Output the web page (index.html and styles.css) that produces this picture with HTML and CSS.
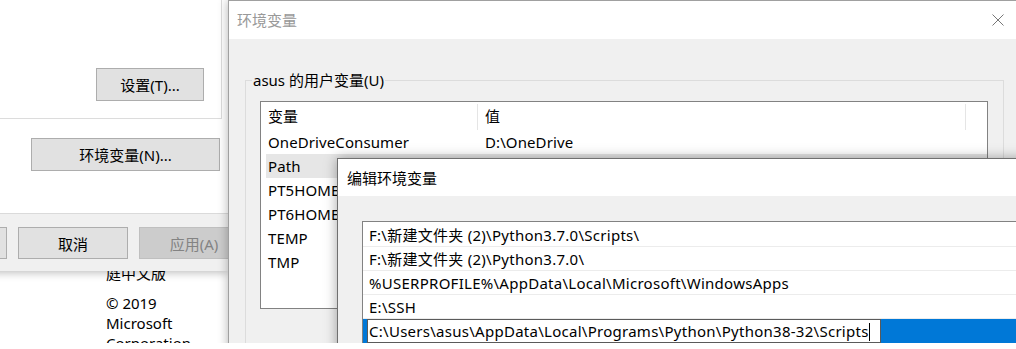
FILE: index.html
```html
<!DOCTYPE html>
<html lang="zh-CN">
<head>
    <meta charset="UTF-8">
    <meta name="viewport" content="width=device-width, initial-scale=1.0">
    <title>编辑环境变量</title>
    <link rel="stylesheet" href="styles.css">
</head>
<body>

<div class="desktop">

    <!-- 关于 Windows (最底层) -->
    <div class="about">
        <p>庭中文版</p>
        <p>© 2019<br>Microsoft<br>Corporation</p>
    </div>

    <!-- 系统属性 -->
    <div class="win sysprops">
        <div class="tabpage">
            <div class="group">
                <button class="btn small">设置(T)...</button>
            </div>
            <button class="btn wide">环境变量(N)...</button>
        </div>
        <div class="footer">
            <button class="btn">确定</button>
            <button class="btn">取消</button>
            <button class="btn" disabled>应用(A)</button>
        </div>
    </div>

    <!-- 环境变量 -->
    <div class="win envvars">
        <div class="titlebar inactive">
            <span>环境变量</span>
            <svg class="close" width="12" height="12" viewBox="0 0 12 12">
                <path d="M0.5 0.5L11.5 11.5M11.5 0.5L0.5 11.5" />
            </svg>
        </div>
        <div class="winbody">
            <fieldset class="groupbox">
                <legend>asus 的用户变量(U)</legend>
                <div class="listview">
                    <div class="lv-head"><span>变量</span><span>值</span></div>
                    <div class="lv-row"><span>OneDriveConsumer</span><span>D:\OneDrive</span></div>
                    <div class="lv-row selected"><span>Path</span><span></span></div>
                    <div class="lv-row"><span>PT5HOME</span><span></span></div>
                    <div class="lv-row"><span>PT6HOME</span><span></span></div>
                    <div class="lv-row"><span>TEMP</span><span></span></div>
                    <div class="lv-row"><span>TMP</span><span></span></div>
                </div>
            </fieldset>
        </div>
    </div>

    <!-- 编辑环境变量 -->
    <div class="win editenv">
        <div class="titlebar">
            <span>编辑环境变量</span>
        </div>
        <div class="winbody">
            <div class="pathlist">
                <div class="path-row">F:\新建文件夹 (2)\Python3.7.0\Scripts\</div>
                <div class="path-row">F:\新建文件夹 (2)\Python3.7.0\</div>
                <div class="path-row">%USERPROFILE%\AppData\Local\Microsoft\WindowsApps</div>
                <div class="path-row">E:\SSH</div>
                <div class="path-row editing">
                    <span class="editbox">C:\Users\asus\AppData\Local\Programs\Python\Python38-32\Scripts<span class="caret"></span></span>
                </div>
            </div>
        </div>
    </div>

</div>

</body>
</html>
```

FILE: styles.css
```css
* {
    box-sizing: border-box;
}

body {
    margin: 0;
    background-color: #fff;
    font-family: "Noto Sans", "Noto Sans CJK SC", sans-serif;
    font-size: 15px;
    line-height: 20px;
    color: #000;
}

.desktop {
    position: relative;
    width: 1016px;
    height: 343px;
    overflow: hidden;
    background-color: #fff;
}

/* 关于 Windows */
.about {
    position: absolute;
    left: 0;
    top: 0;
    width: 1016px;
    height: 343px;
    padding: 263px 0 0 106px;
    background-color: #fff;
}

.about p {
    margin: 0 0 10px;
}

/* 窗口通用 */
.win {
    position: absolute;
    background-color: #f0f0f0;
}

.titlebar {
    display: flex;
    align-items: center;
    justify-content: space-between;
    background-color: #fff;
}

.titlebar.inactive {
    color: #999;
}

.btn {
    font-family: inherit;
    font-size: 15px;
    color: #000;
    background-color: #e1e1e1;
    border: 1px solid #adadad;
    padding: 0;
    margin: 0;
}

.btn:disabled {
    background-color: #cccccc;
    border-color: #bfbfbf;
    color: #838383;
}

/* 系统属性 */
.sysprops {
    left: -120px;
    top: -40px;
    width: 348px;
    box-shadow: 0 2px 8px rgba(0, 0, 0, 0.25);
}

.tabpage {
    height: 254px;
    background-color: #fff;
    border-bottom: 1px solid #dadada;
}

.group {
    display: flex;
    justify-content: flex-end;
    align-items: flex-end;
    width: 342px;
    height: 159px;
    padding: 0 17px 17px 0;
    border-right: 1px solid #dcdcdc;
    border-bottom: 1px solid #dcdcdc;
}

.btn.small {
    width: 108px;
    height: 33px;
}

.btn.wide {
    display: block;
    width: 189px;
    height: 33px;
    margin: 19px 0 0 151px;
}

.footer {
    display: flex;
    gap: 11px;
    padding: 13px 0 12px 17px;
}

.footer .btn {
    flex: none;
    width: 110px;
    height: 32px;
}

/* 环境变量 */
.envvars {
    left: 228px;
    top: 0;
    width: 794px;
    height: 380px;
    border: 1px solid #a0a0a0;
    box-shadow: 0 0 10px rgba(0, 0, 0, 0.3);
}

.envvars .titlebar {
    height: 38px;
    padding: 0 17px 0 8px;
}

.close {
    fill: none;
    stroke: #777;
    stroke-width: 1;
}

.envvars .winbody {
    padding: 31px 17px 0 16px;
}

.groupbox {
    margin: 0;
    padding: 0;
    min-width: 0;
    height: 320px;
    border: 1px solid #dcdcdc;
}

.groupbox legend {
    margin-left: 6px;
    padding: 0 1px;
    line-height: 20px;
}

.listview {
    height: 208px;
    margin: 11px 15px 0 14px;
    background-color: #fff;
    border: 1px solid #828282;
}

.lv-head {
    display: grid;
    grid-template-columns: 217px 488px;
    height: 28px;
    padding-top: 2px;
}

.lv-head span {
    padding-left: 7px;
    line-height: 25px;
    border-right: 1px solid #e5e5e5;
}

.lv-row {
    display: grid;
    grid-template-columns: 212px 488px;
    height: 24px;
    margin-left: 5px;
    line-height: 24px;
    letter-spacing: 0.1px;
}

.lv-row span:first-child {
    padding-left: 2px;
}

.lv-row span:last-child {
    padding-left: 7px;
}

.lv-row.selected {
    background-color: #e6e6e6;
}

/* 编辑环境变量 */
.editenv {
    left: 337px;
    top: 158px;
    width: 700px;
    height: 220px;
    border: 1px solid #707070;
    box-shadow: 0 0 12px rgba(0, 0, 0, 0.35);
}

.editenv .titlebar {
    height: 37px;
    padding-left: 9px;
}

.editenv .winbody {
    padding: 25px 0 0 24px;
}

.pathlist {
    padding-top: 1px;
    background-color: #fff;
    border-top: 1px solid #828282;
    border-left: 1px solid #828282;
}

.path-row {
    height: 24px;
    padding-left: 6px;
    line-height: 24px;
    white-space: nowrap;
    letter-spacing: 0.27px;
    border-bottom: 1px solid #ececec;
}

.path-row.editing {
    padding-left: 4px;
    background-color: #0078d7;
    border-bottom: none;
}

.editbox {
    display: inline-block;
    width: 514px;
    height: 24px;
    padding-left: 1px;
    line-height: 22px;
    background-color: #fff;
    border: 1px solid #5a5a5a;
}

.caret {
    display: inline-block;
    width: 1px;
    height: 18px;
    vertical-align: -4px;
    background-color: #000;
}
```
